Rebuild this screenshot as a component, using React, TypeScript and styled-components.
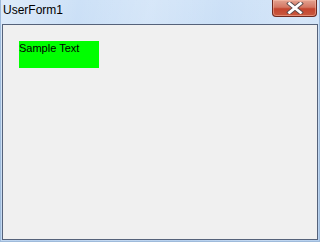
import React from "react";
import styled, { createGlobalStyle } from "styled-components";

const Global = createGlobalStyle`
  html, body { margin: 0; padding: 0; }
  body { width: 320px; height: 242px; overflow: hidden; }
`;

const Window = styled.div`
  width: 320px;
  height: 242px;
  box-sizing: border-box;
  display: flex;
  flex-direction: column;
  background:
    linear-gradient(100deg, rgba(255,255,255,0.35) 0%, rgba(255,255,255,0) 22%, rgba(255,255,255,0.2) 42%, rgba(255,255,255,0) 62%, rgba(255,255,255,0.2) 85%, rgba(255,255,255,0) 100%),
    linear-gradient(180deg, #cde1f7 0%, #bfd7f2 60%, #b6d0ee 100%);
  border-left: 1px solid #9fbbdb;
  border-right: 1px solid #9fbbdb;
  border-bottom: 1px solid #9fbbdb;
`;

const TitleBar = styled.div`
  height: 24px;
  display: flex;
  align-items: flex-start;
  justify-content: space-between;
  padding-left: 2px;
  padding-right: 2px;
`;

const Title = styled.span`
  font-family: "Liberation Sans", Arial, sans-serif;
  font-size: 12px;
  color: #000;
  line-height: 12px;
  margin-top: 4px;
`;

const CloseButton = styled.div`
  width: 45px;
  height: 17px;
  box-sizing: border-box;
  border: 1px solid #6e2a20;
  border-top: none;
  border-radius: 0 0 4px 4px;
  background: linear-gradient(180deg, #e3a391 0%, #d47763 45%, #c4452f 55%, #c95a3f 100%);
  box-shadow: inset 0 0 0 1px rgba(255, 200, 180, 0.45);
  display: flex;
  align-items: center;
  justify-content: center;
`;

const Client = styled.div`
  flex: 1;
  margin: 0 1px 1px 1px;
  border: 1px solid #55627a;
  background: #f0f0f0;
  padding: 16px;
  display: flex;
  align-items: flex-start;
`;

const Label = styled.div`
  width: 80px;
  height: 27px;
  background: #00ff00;
  font-family: "Liberation Sans", Arial, sans-serif;
  font-size: 11px;
  line-height: 15px;
  color: #000;
`;

export default function App() {
  return (
    <>
      <Global />
      <Window>
        <TitleBar>
          <Title>UserForm1</Title>
          <CloseButton>
            <svg width="18" height="12" viewBox="0 0 18 12">
              <path d="M3.5 1.5 L14.5 10.5 M14.5 1.5 L3.5 10.5" stroke="#5a4a4a" strokeWidth="4.6" strokeLinecap="square" fill="none" />
              <path d="M3.5 1.5 L14.5 10.5 M14.5 1.5 L3.5 10.5" stroke="#ffffff" strokeWidth="2.8" strokeLinecap="square" fill="none" />
            </svg>
          </CloseButton>
        </TitleBar>
        <Client>
          <Label>Sample Text</Label>
        </Client>
      </Window>
    </>
  );
}
